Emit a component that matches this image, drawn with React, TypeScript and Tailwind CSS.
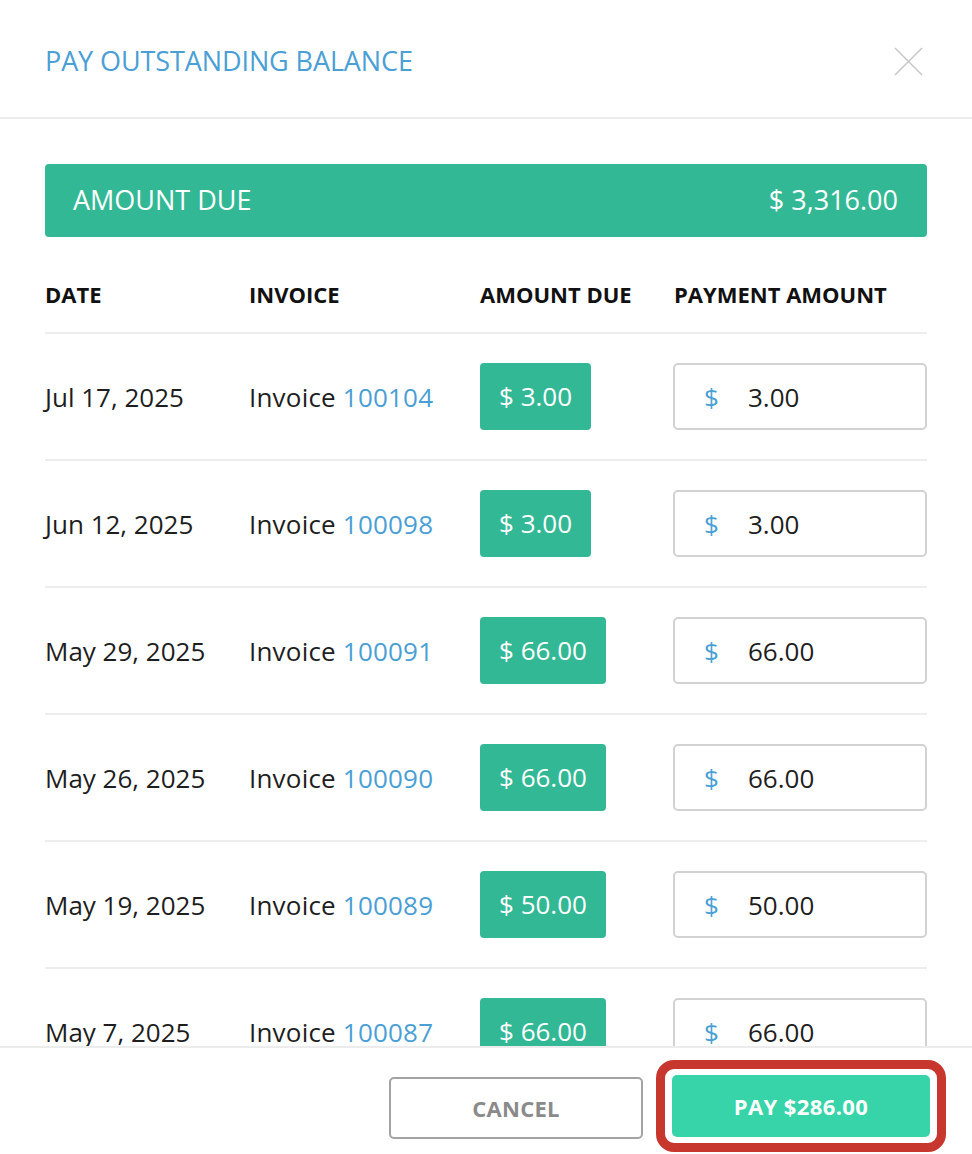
import React from "react";

const rows = [
  { date: "Jul 17, 2025", inv: "100104", amt: "3.00" },
  { date: "Jun 12, 2025", inv: "100098", amt: "3.00" },
  { date: "May 29, 2025", inv: "100091", amt: "66.00" },
  { date: "May 26, 2025", inv: "100090", amt: "66.00" },
  { date: "May 19, 2025", inv: "100089", amt: "50.00" },
  { date: "May 7, 2025", inv: "100087", amt: "66.00" },
];

export default function App() {
  return (
    <div
      className="w-[972px] h-[1154px] bg-white flex flex-col overflow-hidden text-[#1e1e1e]"
      style={{ fontFamily: '"Open Sans", "Noto Sans", sans-serif' }}
    >
      <div className="h-[119px] shrink-0 border-b-2 border-[#ececec] flex items-center justify-between pl-[45px] pr-[49px] pt-[6px]">
        <div className="text-[27px] text-[#4a9fd5] tracking-[-0.1px]">PAY OUTSTANDING BALANCE</div>
        <svg width="29" height="29" viewBox="0 0 30 30">
          <path d="M1 1 L29 29 M29 1 L1 29" stroke="#c9c9c9" strokeWidth="1.6" fill="none" />
        </svg>
      </div>
      <div className="flex-1 overflow-hidden px-[45px] pt-[45px]">
        <div className="h-[73px] rounded-[4px] bg-[#33b895] flex items-center justify-between pl-[28px] pr-[29px] text-white text-[27px]">
          <span>AMOUNT DUE</span>
          <span>$ 3,316.00</span>
        </div>
        <div className="grid grid-cols-[204px_231px_194px_1fr] pt-[43px] pb-[24px] border-b-2 border-[#ededed] text-[22px] font-bold text-[#111] leading-[28px]">
          <div>DATE</div>
          <div>INVOICE</div>
          <div>AMOUNT DUE</div>
          <div>PAYMENT AMOUNT</div>
        </div>
        {rows.map((r) => (
          <div
            key={r.inv}
            className="grid grid-cols-[204px_230px_194px_1fr] items-center h-[127px] border-b-2 border-[#ededed] text-[26px]"
          >
            <div className="pt-[2px]">{r.date}</div>
            <div className="pt-[2px] tracking-[0.2px]">
              Invoice <span className="text-[#4a9fd5]">{r.inv}</span>
            </div>
            <div className="pl-[1px]">
              <span className="inline-flex items-center h-[67px] px-[19px] rounded-[4px] bg-[#33b895] text-white">
                $ {r.amt}
              </span>
            </div>
            <div className="h-[67px] border-2 border-[#d2d2d2] rounded-[5px] flex items-center pl-[29px] pt-[2px]">
              <span className="text-[#4a9fd5] w-[44px]">$</span>
              <span>{r.amt}</span>
            </div>
          </div>
        ))}
      </div>
      <div className="h-[108px] shrink-0 border-t-2 border-[#ececec] flex items-center justify-end gap-[13px] pr-[26px] pt-[10px]">
        <button className="w-[254px] h-[62px] mt-[4px] rounded-[5px] border-2 border-[#a3a3a3] bg-white text-[22px] font-bold text-[#8a8a8a] tracking-[0.3px]">
          CANCEL
        </button>
        <div className="rounded-[18px] border-[9px] border-[#c8372d] px-[7px] py-[6px]">
          <button className="w-[258px] h-[62px] rounded-[5px] bg-[#37d4a9] text-[22px] font-bold text-white tracking-[0.4px]">
            PAY $286.00
          </button>
        </div>
      </div>
    </div>
  );
}
